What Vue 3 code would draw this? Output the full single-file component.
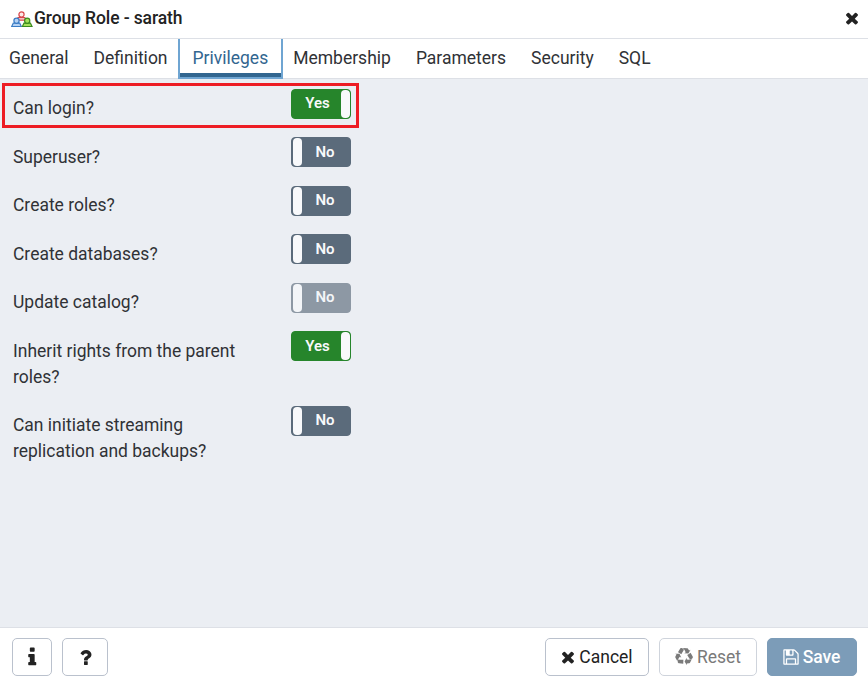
<script setup>
const tabs = ['General', 'Definition', 'Privileges', 'Membership', 'Parameters', 'Security', 'SQL']
const active = 'Privileges'
const privileges = [
  { label: 'Can login?', on: true, highlighted: true },
  { label: 'Superuser?', on: false },
  { label: 'Create roles?', on: false },
  { label: 'Create databases?', on: false },
  { label: 'Update catalog?', on: false, disabled: true },
  { label: 'Inherit rights from the parent roles?', on: true },
  { label: 'Can initiate streaming replication and backups?', on: false },
]
const icons = {
  times: 'M1490 1322q0 40-28 68l-136 136q-28 28-68 28t-68-28l-294-294-294 294q-28 28-68 28t-68-28l-136-136q-28-28-28-68t28-68l294-294-294-294q-28-28-28-68t28-68l136-136q28-28 68-28t68 28l294 294 294-294q28-28 68-28t68 28l136 136q28 28 28 68t-28 68l-294 294 294 294q28 28 28 68z',
  info: 'M1216 1344v128q0 26-19 45t-45 19h-512q-26 0-45-19t-19-45v-128q0-26 19-45t45-19h64v-384h-64q-26 0-45-19t-19-45v-128q0-26 19-45t45-19h384q26 0 45 19t19 45v576h64q26 0 45 19t19 45zm-128-1152v192q0 26-19 45t-45 19h-256q-26 0-45-19t-19-45v-192q0-26 19-45t45-19h256q26 0 45 19t19 45z',
  question: 'M1088 1256v240q0 16-12 28t-28 12h-240q-16 0-28-12t-12-28v-240q0-16 12-28t28-12h240q16 0 28 12t12 28zm316-600q0 54-15.5 101t-35 76.5-55 59.5-57.5 43.5-61 35.5q-41 23-68.5 65t-27.5 67q0 17-12 32.5t-28 15.5h-240q-15 0-25.5-18.5t-10.5-37.5v-45q0-83 65-156.5t143-108.5q59-27 84-56t25-76q0-42-46.5-74t-107.5-32q-65 0-108 29-35 25-107 115-13 16-31 16-12 0-25-8l-164-125q-13-10-15.5-25t5.5-28q160-266 464-266 80 0 161 31t146 83 106 127.5 41 158.5z',
  recycle: 'M836 1169l-15 368-2 22-420-29q-36-3-67-31.5t-47-65.5q-11-27-14.5-55t4-65 12-55 21.5-64 19-53q78 12 509 28zm-387-586l180 379-147-92q-63 72-111.5 144.5t-72.5 125-39.5 94.5-18.5 63l-4 21-190-357q-17-26-18-56t6-47l8-18q35-63 114-188l-140-86zm1231 517l-188 359q-12 29-36.5 46.5t-43.5 20.5l-18 4q-71 7-219 12l8 164-230-367 211-362 7 173q170 16 283 5t170-33zm-785-924q-47 63-265 435l-317-187-19-12 225-356q20-31 60-45t80-10q24 2 48.5 12t42 21 41.5 33 36 34.5 36 39.5 32 35zm655 307l212 363q18 37 12.5 76t-27.5 74q-13 20-33 37t-38 28-48.5 22-47 16-51.5 14-46 12q-34-72-265-436l313-195zm-143-226l142-83-220 373-419-20 151-86q-34-89-75-166t-75.5-123.5-64.5-80-47-46.5l-17-13 405 1q31-3 58 10.5t39 28.5l11 15q39 61 112 190z',
  save: 'M512 1536h768v-384h-768v384zm896 0h128v-896q0-14-10-38.5t-20-34.5l-281-281q-10-10-34-20t-39-10v416q0 40-28 68t-68 28h-576q-40 0-68-28t-28-68v-416h-128v1280h128v-416q0-40 28-68t68-28h832q40 0 68 28t28 68v416zm-384-928v-320q0-13-9.5-22.5t-22.5-9.5h-192q-13 0-22.5 9.5t-9.5 22.5v320q0 13 9.5 22.5t22.5 9.5h192q13 0 22.5-9.5t9.5-22.5zm640 32v928q0 40-28 68t-68 28h-1344q-40 0-68-28t-28-68v-1344q0-40 28-68t68-28h928q40 0 88 20t76 48l280 280q28 28 48 76t20 88z',
}
</script>

<template>
  <div class="dialog">
    <header class="titlebar">
      <svg class="role-icon" viewBox="0 0 22 17" width="22" height="17">
        <g stroke-width="1.2">
          <g fill="#fbe9e9" stroke="#d8474b">
            <path d="M5.8 9.2L7 6.6h6.8l1.4 2.6z" />
            <circle cx="10.5" cy="3.4" r="2.6" />
          </g>
          <g fill="#b5d2f3" stroke="#3b7cc4">
            <path d="M.7 15.5l1.6-3.4h6.4l1.6 3.4z" />
            <circle cx="5.5" cy="9.7" r="2.6" />
          </g>
          <g fill="#a5e05a" stroke="#3b8a1f">
            <path d="M11.4 15.5l1.6-3.4h6.4l1.6 3.4z" />
            <circle cx="16.2" cy="9.7" r="2.6" />
          </g>
        </g>
      </svg>
      <span class="title">Group Role - sarath</span>
      <svg class="icon close" viewBox="0 0 1792 1792"><path :d="icons.times" /></svg>
    </header>

    <nav class="tabs">
      <div v-for="tab in tabs" :key="tab" class="tab" :class="{ active: tab === active }">{{ tab }}</div>
    </nav>

    <main class="panel">
      <div v-for="p in privileges" :key="p.label" class="row" :class="{ highlighted: p.highlighted }">
        <div class="label">{{ p.label }}</div>
        <div class="toggle" :class="{ on: p.on, disabled: p.disabled }">
          <span class="state">{{ p.on ? 'Yes' : 'No' }}</span>
          <span class="handle"></span>
        </div>
      </div>
    </main>

    <footer class="footer">
      <button class="btn info"><svg class="icon" viewBox="0 0 1792 1792"><path :d="icons.info" /></svg></button>
      <button class="btn help"><svg class="icon" viewBox="0 0 1792 1792"><path :d="icons.question" /></svg></button>
      <button class="btn cancel"><svg class="icon" viewBox="0 0 1792 1792"><path :d="icons.times" /></svg><span>Cancel</span></button>
      <button class="btn reset"><svg class="icon" viewBox="0 0 1792 1792"><path :d="icons.recycle" /></svg><span>Reset</span></button>
      <button class="btn save"><svg class="icon" viewBox="0 0 1792 1792"><path :d="icons.save" /></svg><span>Save</span></button>
    </footer>
  </div>
</template>

<style>
body { margin: 0; }
</style>

<style scoped>
.dialog {
  box-sizing: border-box;
  width: 868px;
  height: 684px;
  display: flex;
  flex-direction: column;
  background: #fff;
  color: #303236;
  font-family: Roboto, sans-serif;
  font-size: 17.5px;
  line-height: 26px;
}
.icon { width: 18px; height: 18px; fill: currentColor; flex: none; display: block; }
.titlebar {
  box-sizing: border-box;
  height: 39px;
  flex: none;
  display: flex;
  align-items: center;
  padding: 0 7px 2px 11px;
  border-bottom: 1px solid #dde0e6;
  color: #222;
}
.role-icon { flex: none; margin: 2px 1px 0 0; }
.title { flex: 1; font-weight: 500; letter-spacing: -.11px; white-space: nowrap; }
.tabs {
  box-sizing: border-box;
  height: 40px;
  flex: none;
  display: flex;
  padding-left: 9px;
  border-bottom: 1px solid #dde0e6;
}
.tab { margin-right: 25px; padding-top: 6px; white-space: nowrap; }
.tab.active {
  box-sizing: border-box;
  height: 40px;
  margin: 0 10px 0 -15px;
  padding: 6px 13px 0;
  color: #326690;
  border: 2px solid #6fa5d2;
  border-top: 0;
  box-shadow: inset 0 -4px 0 #326690;
}
.panel {
  flex: 1;
  display: flex;
  flex-direction: column;
  align-items: flex-start;
  gap: 18.5px;
  padding: 4px 2px 0;
  background: #ebeef3;
}
.row {
  box-sizing: border-box;
  display: flex;
  align-items: flex-start;
  width: 357px;
  min-height: 30px;
  padding-left: 11px;
}
.row.highlighted {
  height: 45px;
  margin-bottom: -9.5px;
  padding: 3px 0 0 8px;
  border: 3px solid #ed1c24;
}
.label { box-sizing: border-box; width: 278px; padding: 6.7px 40px 0 0; margin-bottom: -2.7px; font-size: 17.48px; }
.highlighted .label { padding-top: 6.3px; }
.toggle {
  box-sizing: border-box;
  width: 60px;
  height: 30px;
  display: flex;
  flex-direction: row-reverse;
  border: 1px solid #5b6b7b;
  border-radius: 4px;
  background: #5b6b7b;
  color: #f8f9fb;
  overflow: hidden;
}
.toggle.on { flex-direction: row; background: #26852b; border-color: #26852b; }
.toggle.disabled { opacity: .65; }
.state { flex: 1; padding: .7px 2px 0 0; text-align: center; font-size: 15px; font-weight: 600; line-height: 26px; }
.on .state { padding: .7px 0 0 2px; }
.highlighted .state { padding-top: 0; }
.handle { width: 9px; height: 28px; margin: 0 0 0 1px; border-radius: 4px; background: #f8f9fb; }
.on .handle { margin: 0; }
.footer {
  box-sizing: border-box;
  height: 57px;
  flex: none;
  display: flex;
  align-items: flex-start;
  gap: 10px;
  padding: 10px 11px 0 12px;
  border-top: 1px solid #dde0e6;
}
.btn {
  box-sizing: border-box;
  height: 38px;
  display: flex;
  align-items: center;
  justify-content: center;
  gap: 2px;
  padding: 0;
  border: 1px solid #bac1cd;
  border-radius: 5px;
  background: #fff;
  color: #222;
  font: inherit;
}
.info { width: 40px; }
.help { width: 46px; }
.info .icon { width: 22.5px; height: 22.5px; }
.help .icon { width: 21px; height: 21px; }
.cancel { width: 104px; margin-left: auto; padding-right: 2px; }
.reset { width: 98px; gap: 4px; color: #7a7a7a; border-color: #cfd4dc; }
.save { width: 90px; gap: 3px; padding-right: 2px; color: #fff; background: #7c9cb8; border-color: #7c9cb8; font-weight: 500; letter-spacing: -.1px; }
</style>
